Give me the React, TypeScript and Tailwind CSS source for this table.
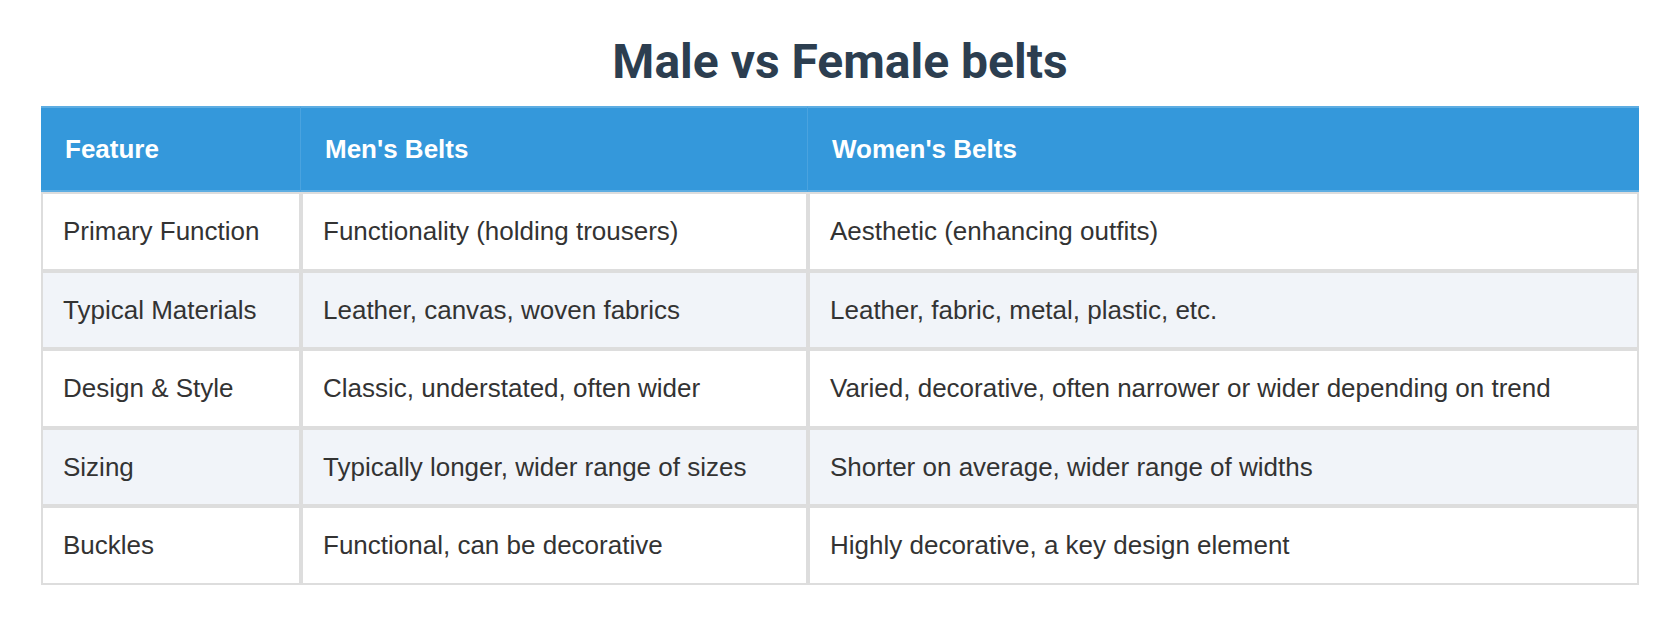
import React from "react";

const rows: [string, string, string][] = [
  ["Primary Function", "Functionality (holding trousers)", "Aesthetic (enhancing outfits)"],
  ["Typical Materials", "Leather, canvas, woven fabrics", "Leather, fabric, metal, plastic, etc."],
  ["Design & Style", "Classic, understated, often wider", "Varied, decorative, often narrower or wider depending on trend"],
  ["Sizing", "Typically longer, wider range of sizes", "Shorter on average, wider range of widths"],
  ["Buckles", "Functional, can be decorative", "Highly decorative, a key design element"],
];

export default function App() {
  return (
    <div className="min-h-[626px] w-full bg-white px-[41px] pt-[34px]">
      <h1 className="mb-[16px] text-center text-[48px] leading-[56px] font-bold text-[#2c3e50] [font-family:Roboto,'Liberation_Sans',sans-serif]">
        Male vs Female belts
      </h1>
      <table className="w-full table-fixed border-separate border-spacing-0 [font-family:'Liberation_Sans',Arial,sans-serif]">
        <colgroup>
          <col className="w-[260px]" />
          <col className="w-[507px]" />
          <col />
        </colgroup>
        <thead>
          <tr className="bg-[#3498db]">
            {["Feature", "Men's Belts", "Women's Belts"].map((h, i) => (
              <th
                key={h}
                className={
                  "border-t-2 border-b-2 border-t-[#5dade2] border-b-[#5dade2] px-[24px] py-[26px] text-left text-[26px] leading-[30px] font-bold text-white " +
                  (i < 2 ? "border-r border-r-[#4aa3df]" : "")
                }
              >
                {h}
              </th>
            ))}
          </tr>
        </thead>
        <tbody>
          {rows.map((r, ri) => (
            <tr key={ri} className={ri % 2 === 1 ? "bg-[#f1f4f9]" : "bg-white"}>
              {r.map((c, ci) => (
                <td
                  key={ci}
                  className="border-2 border-[#dddddd] px-[20px] py-[22px] text-left text-[26px] leading-[30.5px] font-normal text-[#333333]"
                >
                  {c}
                </td>
              ))}
            </tr>
          ))}
        </tbody>
      </table>
    </div>
  );
}
